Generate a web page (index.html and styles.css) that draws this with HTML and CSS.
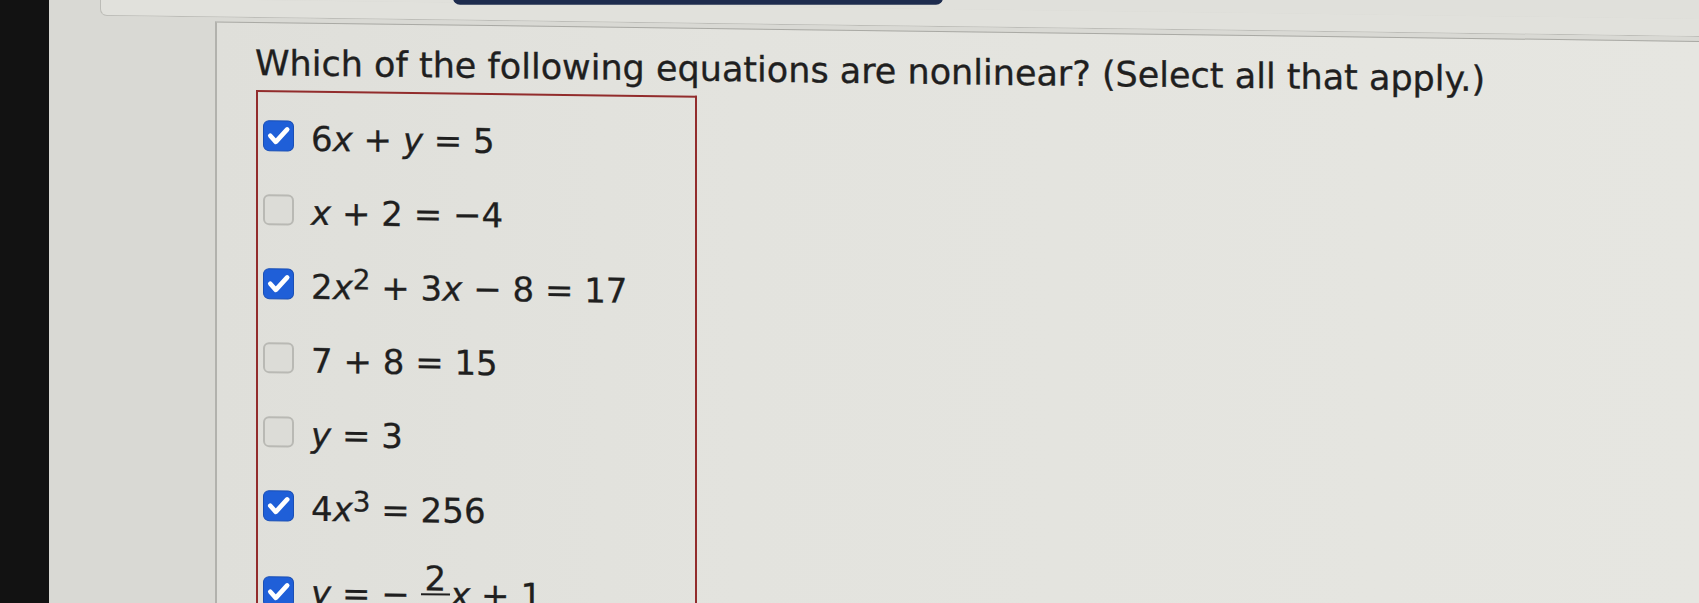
FILE: index.html
```html
<!DOCTYPE html>
<html lang="en">
<head>
<meta charset="utf-8">
<title>Nonlinear equations</title>
<link rel="stylesheet" href="styles.css">
</head>
<body>
<div class="screen">
  <div class="bezel"></div>
  <div class="display">
    <div class="header"><div class="tab"></div></div>
    <div class="sidebar"></div>
    <div class="content">
      <p class="question">Which of the following equations are nonlinear? (Select all that apply.)</p>
      <div class="options">
        <label class="opt">
          <span class="cb on"><svg viewBox="0 0 30 30"><path d="M6.5 15 L12.2 21.3 L24 8.3"/></svg></span>
          <span class="eq">6<i>x</i> + <i>y</i> = 5</span>
        </label>
        <label class="opt">
          <span class="cb off"></span>
          <span class="eq"><i>x</i> + 2 = &minus;4</span>
        </label>
        <label class="opt">
          <span class="cb on"><svg viewBox="0 0 30 30"><path d="M6.5 15 L12.2 21.3 L24 8.3"/></svg></span>
          <span class="eq">2<i>x</i><sup>2</sup> + 3<i>x</i> &minus; 8 = 17</span>
        </label>
        <label class="opt">
          <span class="cb off"></span>
          <span class="eq">7 + 8 = 15</span>
        </label>
        <label class="opt">
          <span class="cb off"></span>
          <span class="eq"><i>y</i> = 3</span>
        </label>
        <label class="opt">
          <span class="cb on"><svg viewBox="0 0 30 30"><path d="M6.5 15 L12.2 21.3 L24 8.3"/></svg></span>
          <span class="eq">4<i>x</i><sup>3</sup> = 256</span>
        </label>
        <label class="opt tall">
          <span class="cb on"><svg viewBox="0 0 30 30"><path d="M6.5 15 L12.2 21.3 L24 8.3"/></svg></span>
          <span class="eq"><i>y</i> = &minus; <span class="frac"><span class="num">2</span><span class="den">3</span></span><i>x</i> + 1</span>
        </label>
      </div>
    </div>
  </div>
</div>
</body>
</html>
```

FILE: styles.css
```css
html, body {
  margin: 0;
  height: 100%;
  overflow: hidden;
  background: #e0e0db;
}

.screen {
  display: flex;
  align-items: flex-start;
  height: 603px;
}

.bezel {
  flex: none;
  width: 49px;
  height: 603px;
  background: #121212;
}

.display {
  flex: 1;
  display: grid;
  grid-template-columns: 166px 1fr;
  grid-template-rows: 18px 1fr;
  row-gap: 3.5px;
  height: 720px;
  background: #d9d9d4;
  transform: skewY(0.75deg);
  transform-origin: 206px 0;
}

.header {
  grid-column: 1 / -1;
  margin-left: 51px;
  box-sizing: border-box;
  background: #e1e1dc;
  border-left: 1.5px solid #bcbcb7;
  border-bottom: 1.5px solid #bdbdb8;
  border-bottom-left-radius: 7px;
  display: flex;
}

.tab {
  margin-left: 352px;
  margin-top: -8px;
  width: 490px;
  height: 7px;
  background: #1e2c4e;
  border-radius: 0 0 8px 8px;
  transform: skewY(-0.75deg);
}

.sidebar {
  grid-row: 2;
  grid-column: 1;
}

.content {
  grid-row: 2;
  grid-column: 2;
  border-top: 1.5px solid #a9a9a4;
  border-left: 2px solid #b2b2ad;
  background: linear-gradient(90deg, #dfdfda 0%, #e3e3de 35%, #e6e6e1 100%);
  padding: 20px 0 0 38px;
}

.question {
  margin: 0 0 7px;
  font-family: "DejaVu Sans", Verdana, sans-serif;
  font-size: 35px;
  line-height: 40px;
  color: #1f1f1f;
  -webkit-text-stroke: 0.35px #1f1f1f;
  white-space: nowrap;
}

.options {
  margin-left: 1px;
  width: 432px;
  height: 600px;
  border: 2px solid #922c2c;
  border-bottom: none;
  padding: 9px 0 0 5px;
  display: flex;
  flex-direction: column;
}

.opt {
  flex: none;
  display: flex;
  align-items: center;
  height: 74px;
}

.cb {
  flex: none;
  box-sizing: border-box;
  width: 31px;
  height: 31px;
  border-radius: 6px;
  margin: 0 17px 5px 0;
}

.cb.on {
  background: #1f5fd8;
  border: 1px solid #1a4fb5;
}

.cb.off {
  background: #dcdcd7;
  border: 2px solid #b9b9b4;
}

.cb svg {
  display: block;
  width: 100%;
  height: 100%;
}

.cb svg path {
  fill: none;
  stroke: #ffffff;
  stroke-width: 4.8;
  stroke-linecap: round;
  stroke-linejoin: round;
}

.eq {
  font-family: "DejaVu Sans", Verdana, sans-serif;
  font-size: 34px;
  color: #1f1f1f;
  -webkit-text-stroke: 0.3px #1f1f1f;
  white-space: nowrap;
}

.eq i {
  font-style: italic;
}

.eq sup {
  font-size: 0.82em;
  vertical-align: 0.36em;
  line-height: 0;
}

.opt.tall {
  height: 110px;
  align-items: flex-start;
}

.opt.tall .cb {
  margin-top: 31px;
}

.opt.tall .eq {
  margin-top: 16px;
}

.frac {
  display: inline-flex;
  flex-direction: column;
  align-items: stretch;
  vertical-align: 16px;
  text-align: center;
}

.num {
  line-height: 30px;
  padding: 0 4px;
}

.den {
  line-height: 30px;
  padding: 10px 4px 0;
  border-top: 2px solid #1f1f1f;
}
```
